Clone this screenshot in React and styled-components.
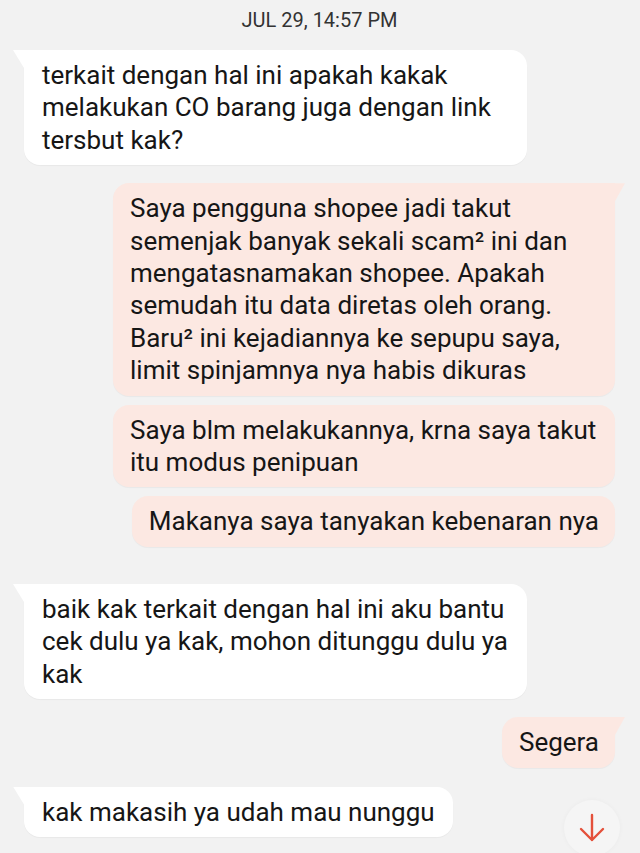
import React from "react";
import styled, { createGlobalStyle, css } from "styled-components";

const GlobalStyle = createGlobalStyle`
  html, body {
    margin: 0;
    padding: 0;
    background: #f2f2f2;
  }
  body {
    font-family: Roboto, "Noto Sans", "Liberation Sans", sans-serif;
    -webkit-font-smoothing: antialiased;
  }
`;

const Screen = styled.div`
  position: relative;
  width: 640px;
  height: 853px;
  overflow: hidden;
  background: #f2f2f2;
`;

const Thread = styled.div`
  display: flex;
  flex-direction: column;
  padding: 0 25px 0 24px;
`;

const Stamp = styled.div`
  margin-top: 8px;
  text-align: center;
  font-size: 20px;
  line-height: 24px;
  color: #333333;
`;

const Row = styled.div`
  display: flex;
  justify-content: ${({ $mine }) => ($mine ? "flex-end" : "flex-start")};
  margin-top: ${({ $gap }) => $gap}px;
`;

const leftTail = css`
  border-top-left-radius: 0;
  &::before {
    content: "";
    position: absolute;
    top: 0;
    left: -11px;
    width: 11px;
    height: 18px;
    background: inherit;
    clip-path: polygon(0 0, 100% 0, 100% 100%);
  }
`;

const rightTail = css`
  border-top-right-radius: 0;
  &::before {
    content: "";
    position: absolute;
    top: 0;
    right: -10px;
    width: 10px;
    height: 18px;
    background: inherit;
    clip-path: polygon(0 0, 100% 0, 0 100%);
  }
`;

const Bubble = styled.div`
  position: relative;
  max-width: ${({ $mine }) => ($mine ? 502 : 503)}px;
  box-sizing: border-box;
  padding: ${({ $mine }) => ($mine ? "9px 16px 9px 17px" : "9px 18px 9px 18px")};
  border-radius: 16px;
  background: ${({ $mine }) => ($mine ? "#fce8e2" : "#ffffff")};
  color: #161616;
  font-size: 26px;
  line-height: 32.4px;
  box-shadow: 0 1px 1px rgba(0, 0, 0, 0.04);
  ${({ $tail, $mine }) => ($tail ? ($mine ? rightTail : leftTail) : "")}
`;

const ScrollDown = styled.button`
  position: absolute;
  left: 564px;
  top: 800px;
  width: 56px;
  height: 56px;
  border: none;
  border-radius: 50%;
  background: #f5f5f5;
  box-shadow: 0 0 5px rgba(0, 0, 0, 0.035);
  display: flex;
  align-items: center;
  justify-content: center;
  padding: 0;
`;

const messages = [
  {
    mine: false,
    tail: true,
    gap: 18,
    text: "terkait dengan hal ini apakah kakak melakukan CO barang juga dengan link tersbut kak?",
  },
  {
    mine: true,
    tail: true,
    gap: 18,
    text: "Saya pengguna shopee jadi takut semenjak banyak sekali scam² ini dan mengatasnamakan shopee. Apakah semudah itu data diretas oleh orang. Baru² ini kejadiannya ke sepupu saya, limit spinjamnya nya habis dikuras",
  },
  {
    mine: true,
    gap: 9,
    text: "Saya blm melakukannya, krna saya takut itu modus penipuan",
  },
  {
    mine: true,
    gap: 9,
    text: "Makanya saya tanyakan kebenaran nya",
  },
  {
    mine: false,
    tail: true,
    gap: 37,
    text: "baik kak terkait dengan hal ini aku bantu cek dulu ya kak, mohon ditunggu dulu ya kak",
  },
  {
    mine: true,
    tail: true,
    gap: 18,
    text: "Segera",
  },
  {
    mine: false,
    tail: true,
    gap: 19,
    text: "kak makasih ya udah mau nunggu",
  },
];

export default function App() {
  return (
    <Screen>
      <GlobalStyle />
      <Thread>
        <Stamp>JUL 29, 14:57 PM</Stamp>
        {messages.map((m, i) => (
          <Row key={i} $mine={m.mine} $gap={m.gap}>
            <Bubble $mine={m.mine} $tail={m.tail}>
              {m.text}
            </Bubble>
          </Row>
        ))}
      </Thread>
      <ScrollDown aria-label="Scroll to latest">
        <svg width="26" height="30" viewBox="0 0 26 30" fill="none">
          <path
            d="M13 2v25M2 16l11 11 11-11"
            stroke="#e4503a"
            strokeWidth="2.4"
            strokeLinecap="round"
            strokeLinejoin="round"
          />
        </svg>
      </ScrollDown>
    </Screen>
  );
}
